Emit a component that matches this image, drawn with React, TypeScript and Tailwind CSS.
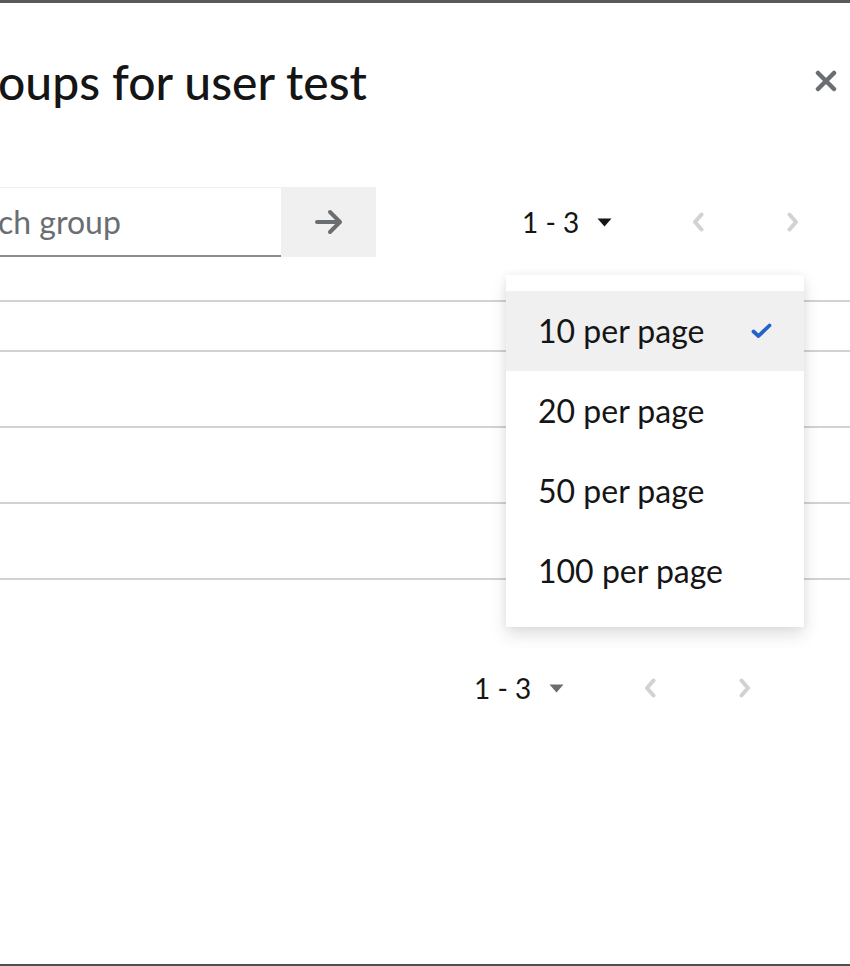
import React from "react";

const FONT = { fontFamily: "Lato, 'Noto Sans', sans-serif" };

const OPTIONS = [10, 20, 50, 100];

function Caret({ className }: { className: string }) {
  return (
    <svg width="15" height="9" viewBox="0 0 15 9" className={className}>
      <path d="M0.5 0.5 L14.5 0.5 L7.5 8.5 Z" fill="currentColor" />
    </svg>
  );
}

function Chevron({ dir }: { dir: "left" | "right" }) {
  return (
    <svg width="12" height="20" viewBox="0 0 12 20" className="text-[#d2d2d2]">
      <path
        d={dir === "left" ? "M9.5 2.5 L3 10 L9.5 17.5" : "M2.5 2.5 L9 10 L2.5 17.5"}
        fill="none"
        stroke="currentColor"
        strokeWidth="4"
        strokeLinecap="round"
        strokeLinejoin="round"
      />
    </svg>
  );
}

function Pagination({ caretClass, className }: { caretClass: string; className: string }) {
  return (
    <div className={`flex items-center h-[70px] ${className}`}>
      <button className="w-[144px] h-full flex items-center pl-[16px] gap-[18px]">
        <span className="text-[28px] text-[#151515] leading-none">1 - 3</span>
        <Caret className={caretClass} />
      </button>
      <button className="w-[95px] h-full flex items-center justify-center">
        <Chevron dir="left" />
      </button>
      <button className="w-[95px] h-full flex items-center justify-center">
        <Chevron dir="right" />
      </button>
    </div>
  );
}

export default function App() {
  return (
    <div className="w-[850px] h-[966px] flex flex-col bg-white overflow-hidden relative" style={FONT}>
      {/* backdrop strip above the modal */}
      <div className="h-[3px] bg-[#5a5a5a] shrink-0" />

      <div className="flex-1 flex flex-col">
        {/* header */}
        <div className="flex items-center justify-between mt-[50px] h-[58px]">
          <h1 className="text-[48px] leading-[58px] font-medium text-[#151515] ml-[-2px] whitespace-nowrap">
            oups for user test
          </h1>
          <button className="mr-[12px] mt-[-2px] w-[24px] h-[24px] flex items-center justify-center text-[#6a6e73]">
            <svg width="22" height="22" viewBox="0 0 22 22">
              <path d="M3 3 L19 19 M19 3 L3 19" stroke="currentColor" strokeWidth="4.5" strokeLinecap="round" />
            </svg>
          </button>
        </div>

        {/* toolbar */}
        <div className="flex items-center mt-[76px] h-[70px]">
          <div className="flex h-[70px]">
            <div className="w-[281px] h-full flex items-center border-t border-[#f0f0f0] border-b-2 border-b-[#8a8d90]">
              <span className="text-[32px] text-[#6a6e73] leading-none ml-[-2px]">ch group</span>
            </div>
            <button className="w-[95px] h-full bg-[#f0f0f0] flex items-center justify-center text-[#6a6e73]">
              <svg width="30" height="26" viewBox="0 0 30 26">
                <path
                  d="M3 13 H26 M16 3 L26 13 L16 23"
                  fill="none"
                  stroke="currentColor"
                  strokeWidth="4"
                  strokeLinecap="round"
                  strokeLinejoin="round"
                />
              </svg>
            </button>
          </div>
          <div className="flex-1" />
          <Pagination caretClass="text-[#151515]" className="mr-[10px]" />
        </div>

        {/* table */}
        <div className="mt-[43px] border-t-2 border-[#d2d2d2]">
          <div className="h-[50px] border-b-2 border-[#d2d2d2]" />
          <div className="h-[76px] border-b-2 border-[#d2d2d2]" />
          <div className="h-[76px] border-b-2 border-[#d2d2d2]" />
          <div className="h-[76px] border-b-2 border-[#d2d2d2]" />
        </div>

        {/* bottom pagination */}
        <div className="flex justify-end mt-[73px]">
          <Pagination caretClass="text-[#6a6e73]" className="mr-[58px]" />
        </div>
      </div>

      <div className="h-[2px] bg-[#4f4f4f] shrink-0" />

      {/* per-page menu */}
      <div className="absolute left-[506px] top-[275px] w-[298px] py-[16px] bg-white shadow-[0_8px_16px_0_rgba(3,3,3,0.12),0_0_8px_0_rgba(3,3,3,0.06)]">
        {OPTIONS.map((n, i) => (
          <div
            key={n}
            className={`h-[80px] flex items-center justify-between pl-[32px] pr-[32px] ${i === 0 ? "bg-[#f0f0f0]" : ""}`}
          >
            <span className="text-[32px] text-[#151515] leading-none">{n} per page</span>
            {i === 0 && (
              <svg width="21" height="16" viewBox="0 0 21 16" className="text-[#2563c9]">
                <path
                  d="M2.5 8.5 L7.5 13 L18.5 2.5"
                  fill="none"
                  stroke="currentColor"
                  strokeWidth="3.8"
                  strokeLinecap="round"
                  strokeLinejoin="round"
                />
              </svg>
            )}
          </div>
        ))}
      </div>
    </div>
  );
}
